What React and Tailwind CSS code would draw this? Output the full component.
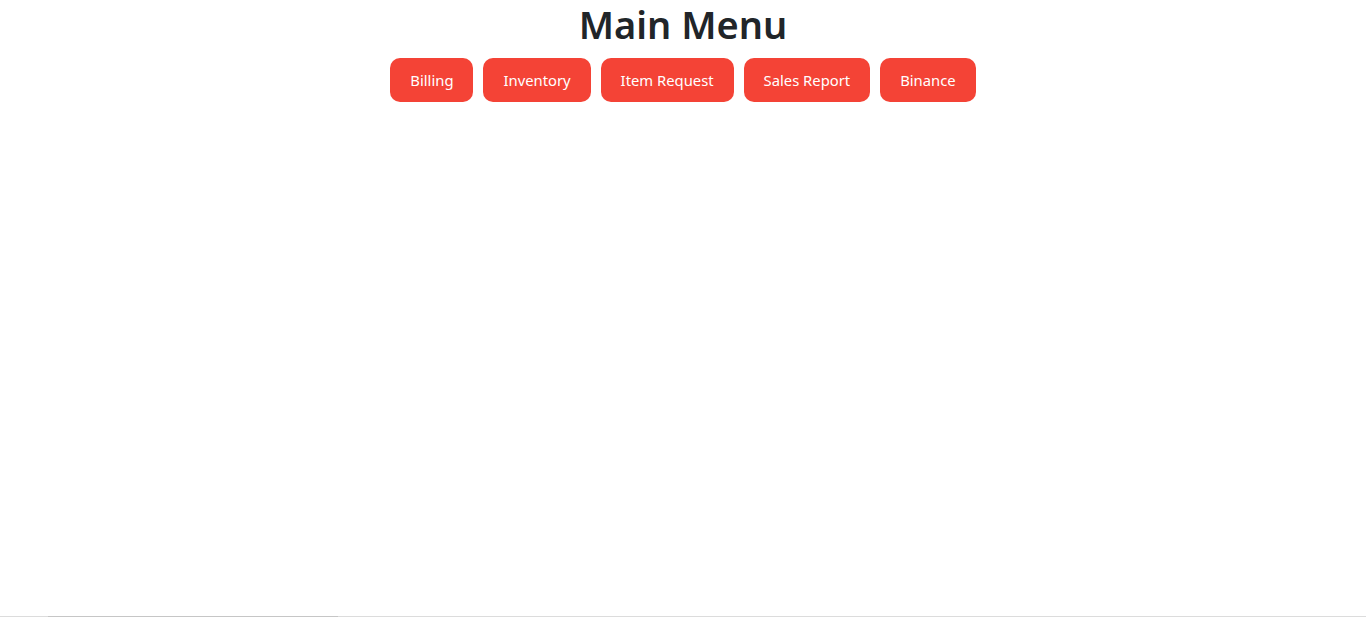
export default function App() {
  const items = ["Billing", "Inventory", "Item Request", "Sales Report", "Binance"];
  return (
    <div
      className="relative flex min-h-[617px] flex-col items-center bg-white"
      style={{ fontFamily: '"Noto Sans", "Open Sans", sans-serif' }}
    >
      <h1 className="mb-[10px] pt-[1px] text-[38px] font-semibold leading-[47px] text-[#212529]">Main Menu</h1>
      <div className="flex gap-[10px]">
        {items.map((t) => (
          <button
            key={t}
            className="h-[44px] rounded-[10px] bg-[#f44336] px-[20px] text-[14.8px] text-white"
          >
            {t}
          </button>
        ))}
      </div>
      <div className="absolute bottom-0 left-0 flex h-px w-full bg-[#dcdcdc]">
        <div className="ml-[48px] h-px w-[290px] bg-[#c6c6c6]" />
      </div>
    </div>
  );
}
